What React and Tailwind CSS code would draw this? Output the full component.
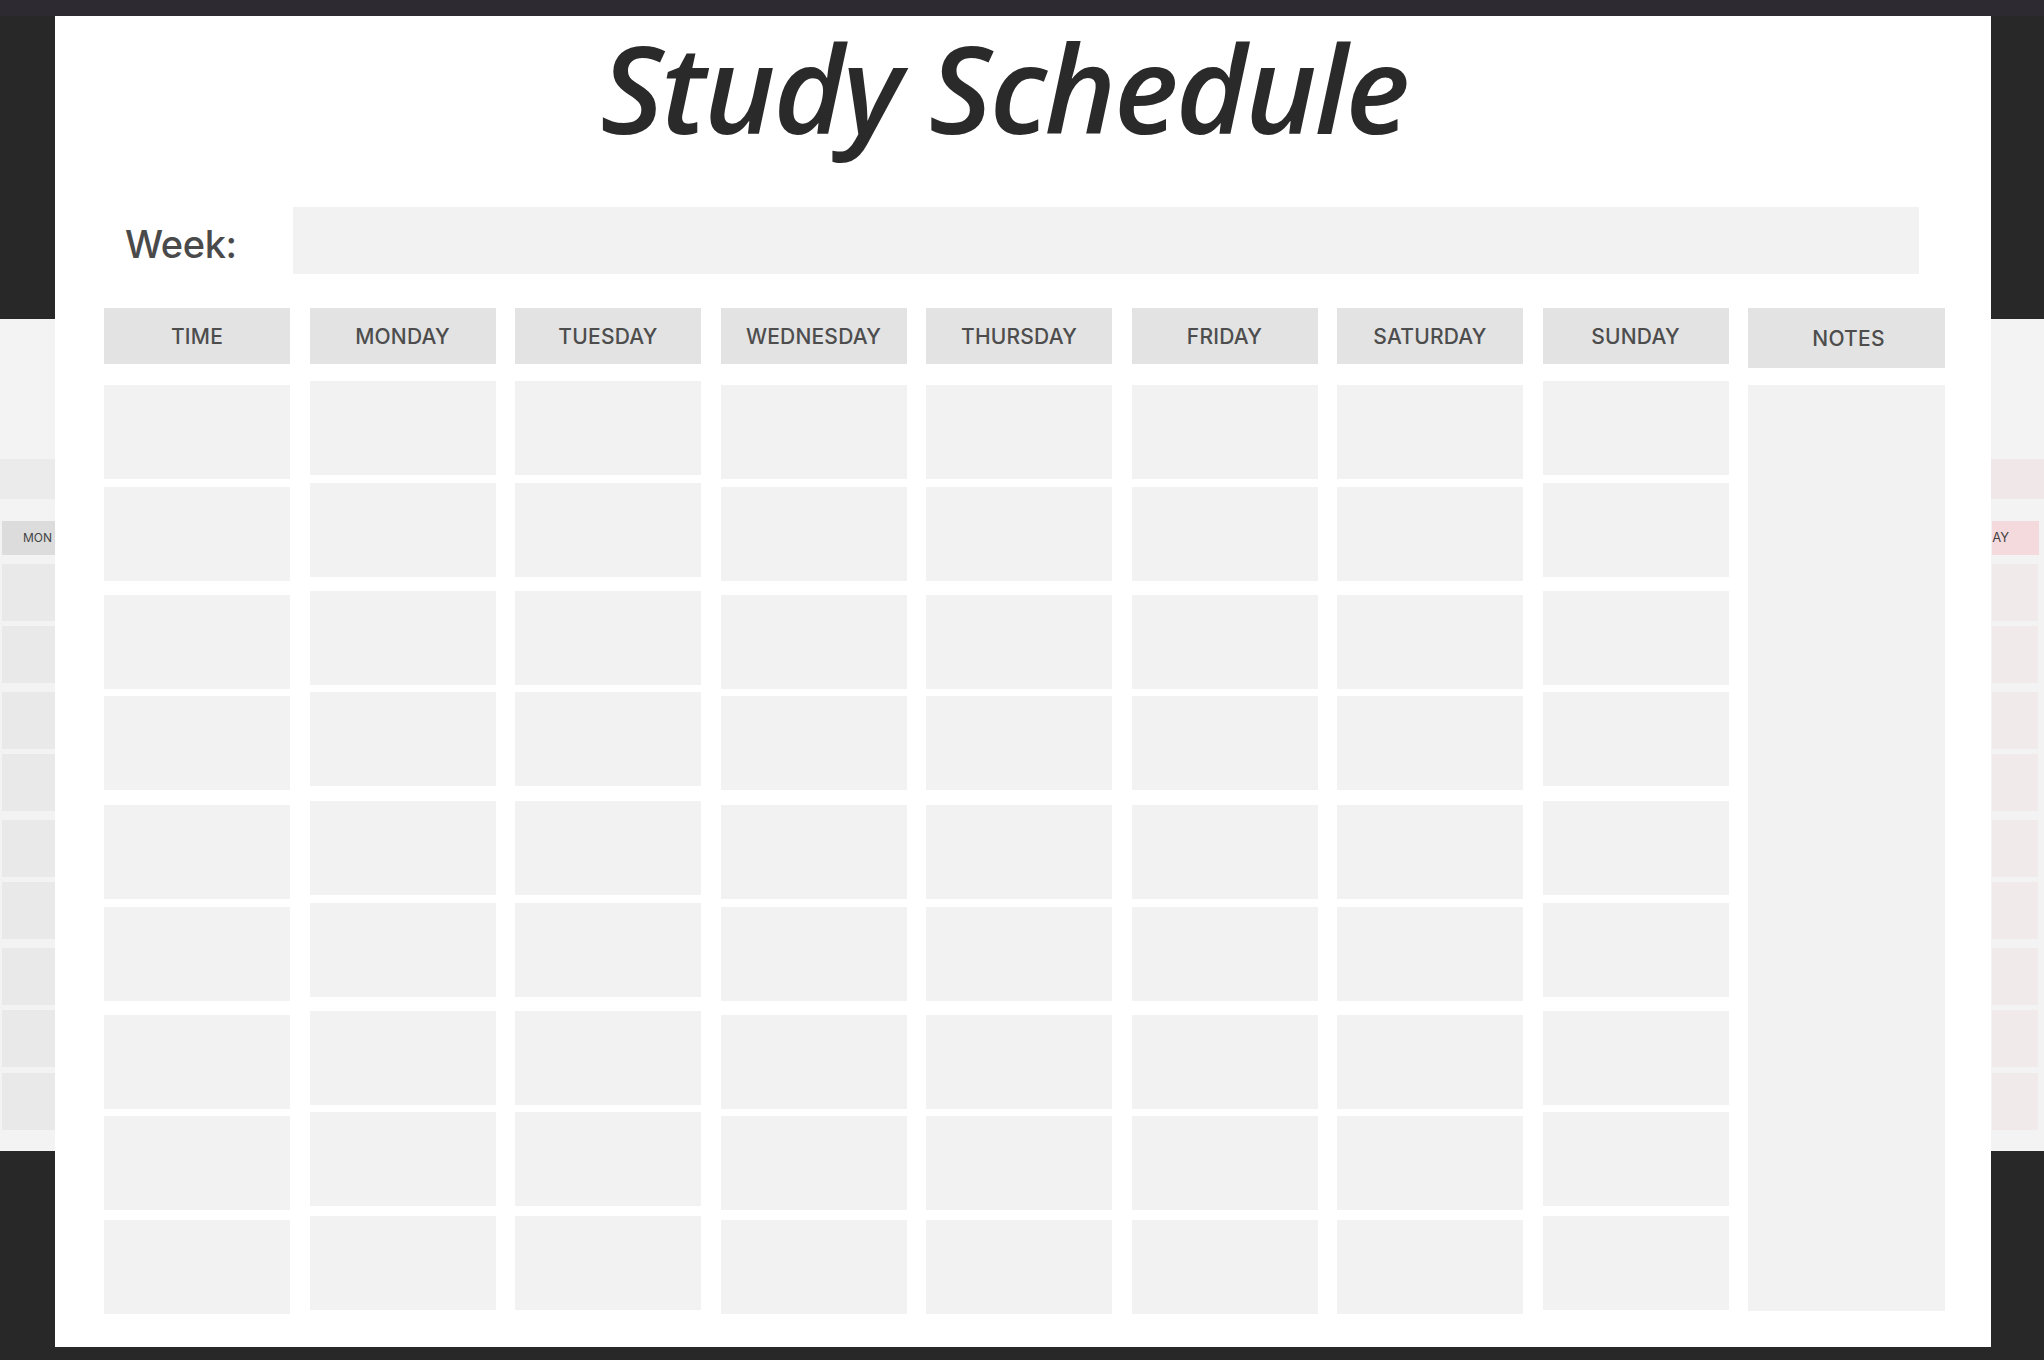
import React from 'react';

const ROW_GAPS = ['mt-0', 'mt-[8px]', 'mt-[14px]', 'mt-[7px]', 'mt-[15px]', 'mt-[8px]', 'mt-[14px]', 'mt-[7px]', 'mt-[10px]'];

const COLUMNS = [
  { label: 'TIME', lifted: false },
  { label: 'MONDAY', lifted: true },
  { label: 'TUESDAY', lifted: true },
  { label: 'WEDNESDAY', lifted: false },
  { label: 'THURSDAY', lifted: false },
  { label: 'FRIDAY', lifted: false },
  { label: 'SATURDAY', lifted: false },
  { label: 'SUNDAY', lifted: true },
];

// faded page peeking out behind the sheet
const SIDE_GAPS = ['mt-[9px]', 'mt-[5px]', 'mt-[9px]', 'mt-[5px]', 'mt-[9px]', 'mt-[5px]', 'mt-[9px]', 'mt-[5px]', 'mt-[6px]'];

function SideStrip({ side }) {
  const pink = side === 'right';
  return (
    <div className={`flex flex-col ${pink ? 'w-[53px]' : 'w-[55px]'} h-full`}>
      <div className="h-[303px] bg-[#282828]" />
      <div className="h-[832px] bg-[#f3f3f3] overflow-hidden flex flex-col pt-[140px]">
        <div className={`h-[40px] ${pink ? 'bg-[#f0e8e8]' : 'bg-[#ebebeb]'}`} />
        {pink ? (
          <div className="mt-[22px] ml-[1px] w-[47px] h-[34px] bg-[#f5dadd] flex items-center justify-end pr-[30px]">
            <span className="text-[13px] text-[#444]">AY</span>
          </div>
        ) : (
          <div className="mt-[22px] ml-[2px] h-[34px] bg-[#dcdcdc] flex items-center pl-[21px]">
            <span className="text-[12px] text-[#444]">MON</span>
          </div>
        )}
        {SIDE_GAPS.map((g, i) => (
          <div
            key={i}
            className={`${g} h-[57px] ${pink ? 'ml-[1px] w-[46px] bg-[#f1eaea]' : 'ml-[2px] bg-[#e9e9e9]'}`}
          />
        ))}
      </div>
      <div className="flex-1 bg-[#282828]" />
    </div>
  );
}

function DayColumn({ label, lifted }) {
  return (
    <div className="w-[186px] flex flex-col shrink-0">
      <div className="h-[56px] bg-[#e3e3e3] flex items-center justify-center pt-[2px]">
        <span className="text-[21px] font-medium text-[#4d4d4d] tracking-[0.01em]">{label}</span>
      </div>
      <div className={`flex flex-col ${lifted ? 'mt-[17px]' : 'mt-[21px]'}`}>
        {ROW_GAPS.map((g, i) => (
          <div key={i} className={`${g} h-[94px] bg-[#f2f2f2]`} />
        ))}
      </div>
    </div>
  );
}

export default function App() {
  return (
    <div className="w-[2044px] h-[1360px] bg-[#282828] flex flex-col overflow-hidden font-['Inter',sans-serif]">
      <div className="h-[16px] bg-[#2e2a31]" />
      <div className="h-[1331px] flex">
        <SideStrip side="left" />

        {/* Sheet */}
        <div className="w-[1936px] h-full bg-white flex flex-col pt-[10px]">
          <h1 className="text-center pr-[38px] font-['Open_Sans',sans-serif] italic font-semibold text-[122px] leading-none tracking-[-0.02em] text-[#2a2a2a]">
            Study Schedule
          </h1>

          <div className="mt-[59px] flex items-center">
            <div className="w-[238px] pl-[70px] pt-[8px]">
              <span className="text-[38px] font-medium text-[#4a4a4a] tracking-[-0.01em]">Week:</span>
            </div>
            <div className="w-[1626px] h-[67px] bg-[#f2f2f2]" />
          </div>

          <div className="mt-[34px] pl-[49px] flex gap-x-[19.5px]">
            {COLUMNS.map((c) => (
              <DayColumn key={c.label} label={c.label} lifted={c.lifted} />
            ))}
            <div className="w-[197px] flex flex-col shrink-0">
              <div className="h-[60px] bg-[#e3e3e3] flex items-center justify-center pt-[2px] pl-[4px]">
                <span className="text-[21px] font-medium text-[#4d4d4d] tracking-[0.01em]">NOTES</span>
              </div>
              <div className="mt-[17px] h-[926px] bg-[#f2f2f2]" />
            </div>
          </div>
        </div>

        <SideStrip side="right" />
      </div>
      <div className="flex-1 bg-[#282828]" />
    </div>
  );
}
